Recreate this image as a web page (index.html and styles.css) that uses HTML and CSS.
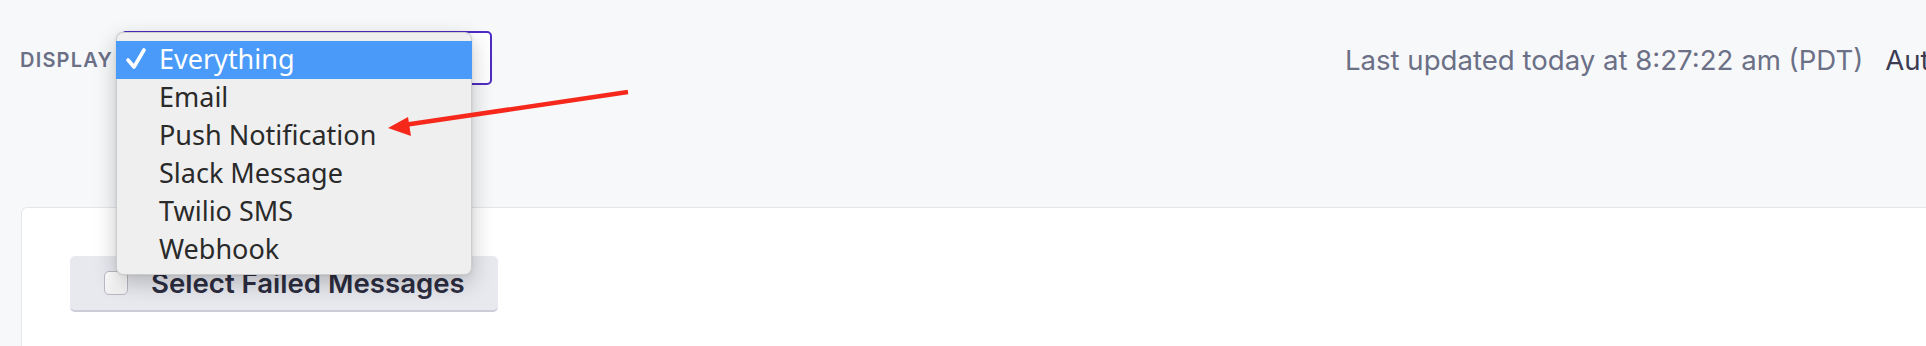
FILE: index.html
```html
<!DOCTYPE html>
<html>
<head>
<meta charset="utf-8">
<link rel="stylesheet" href="styles.css">
</head>
<body>
<div class="page">
  <header class="toolbar">
    <div class="filter">
      <span class="filter-label">DISPLAY</span>
      <div class="select"></div>
    </div>
    <div class="status">
      <span class="updated">Last updated today at 8:27:22 am (PDT)</span>
      <span class="auto">Auto refresh</span>
    </div>
  </header>

  <section class="card">
    <button class="bulk-btn" type="button">
      <span class="checkbox"></span>
      <span class="bulk-label">Select Failed Messages</span>
    </button>
  </section>

  <div class="menu">
    <div class="menu-item selected">
      <svg class="check" width="20" height="22" viewBox="0 0 20 22"><path d="M2 12 L8 19 L18 2" fill="none" stroke="#fff" stroke-width="3.6" stroke-linecap="round" stroke-linejoin="round"/></svg>
      <span>Everything</span>
    </div>
    <div class="menu-item"><span>Email</span></div>
    <div class="menu-item"><span>Push Notification</span></div>
    <div class="menu-item"><span>Slack Message</span></div>
    <div class="menu-item"><span>Twilio SMS</span></div>
    <div class="menu-item"><span>Webhook</span></div>
  </div>

  <svg class="annotation" width="1926" height="346" viewBox="0 0 1926 346">
    <line x1="628" y1="92" x2="404" y2="125" stroke="#f6281c" stroke-width="4.5"/>
    <polygon points="388,128 408,117 411,136" fill="#f6281c"/>
  </svg>
</div>
</body>
</html>
```

FILE: styles.css
```css
html, body {
  margin: 0;
  padding: 0;
  background: #f7f8fa;
  overflow: hidden;
}

.page {
  position: relative;
  width: 1926px;
  height: 346px;
  overflow: hidden;
  font-family: Inter, "Liberation Sans", sans-serif;
}

.toolbar {
  display: flex;
  align-items: center;
  padding: 31px 0 0 20px;
  height: 54px;
  white-space: nowrap;
}

.filter {
  display: flex;
  align-items: center;
}

.filter-label {
  font-size: 20px;
  font-weight: 600;
  letter-spacing: 1.2px;
  color: #6b7086;
  margin-top: 4px;
}

.select {
  margin-left: 8px;
  width: 367px;
  height: 50px;
  border: 2px solid #4d2dc2;
  border-radius: 5px;
  background: #ffffff;
  box-sizing: content-box;
}

.status {
  display: flex;
  align-items: center;
  margin-left: 853px;
  margin-top: 4px;
  flex: none;
}

.updated {
  font-size: 27.6px;
  color: #6b7086;
}

.auto {
  margin-left: 22px;
  font-size: 27.6px;
  color: #3b3c52;
}

.card {
  margin: 122px 0 0 21px;
  background: #ffffff;
  border: 1px solid #e4e6ec;
  border-right: none;
  border-bottom: none;
  border-radius: 6px 0 0 0;
  height: 139px;
  padding: 48px 0 0 48px;
  box-sizing: border-box;
}

.bulk-btn {
  display: flex;
  align-items: center;
  width: 428px;
  height: 56px;
  padding: 0 0 0 34px;
  border: none;
  border-bottom: 2px solid #cbccd6;
  border-radius: 5px;
  background: #e8e9ef;
  font-family: Inter, "Liberation Sans", sans-serif;
  cursor: pointer;
  box-sizing: border-box;
}

.checkbox {
  width: 22px;
  height: 22px;
  border: 1px solid #b9bac2;
  border-radius: 5px;
  background: linear-gradient(#ffffff, #f1f1f3);
  flex: none;
}

.bulk-label {
  margin-left: 23px;
  font-size: 27.6px;
  font-weight: 600;
  color: #2c2d40;
  white-space: nowrap;
}

.menu {
  position: absolute;
  left: 116px;
  top: 32px;
  width: 356px;
  height: 243px;
  box-sizing: border-box;
  padding-top: 8px;
  background: #efefef;
  border: 1px solid rgba(0, 0, 0, 0.14);
  border-radius: 7px;
  box-shadow: 0 8px 22px rgba(0, 0, 0, 0.22), 0 0 3px rgba(0, 0, 0, 0.1);
  font-family: "Noto Sans", "Liberation Sans", sans-serif;
}

.menu-item {
  position: relative;
  height: 38px;
  box-sizing: border-box;
  padding-bottom: 3px;
  display: flex;
  align-items: center;
  padding-left: 42px;
  font-size: 27px;
  color: #2a2a2a;
}

.menu-item.selected {
  background: #4a9af9;
  color: #ffffff;
  margin: 0 -1px;
  padding-left: 43px;
}

.check {
  position: absolute;
  left: 10px;
  top: 7px;
}

.annotation {
  position: absolute;
  left: 0;
  top: 0;
  pointer-events: none;
}
```
